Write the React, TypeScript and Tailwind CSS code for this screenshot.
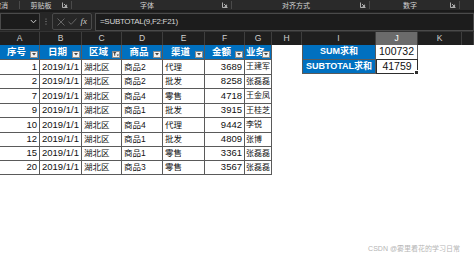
import React from 'react'

const font = { fontFamily: '"Liberation Sans","Noto Sans CJK SC",sans-serif' }

const cols = [
  { l: 'A', w: 'w-[40px]' },
  { l: 'B', w: 'w-[42px]' },
  { l: 'C', w: 'w-[40px]' },
  { l: 'D', w: 'w-[41px]' },
  { l: 'E', w: 'w-[42px]' },
  { l: 'F', w: 'w-[40px]' },
  { l: 'G', w: 'w-[27px]' },
  { l: 'H', w: 'w-[30px]' },
  { l: 'I', w: 'w-[74px]' },
  { l: 'J', w: 'w-[42px]' },
  { l: 'K', w: 'w-[44px]' },
  { l: '', w: 'flex-1' },
]

const heads = ['序号', '日期', '区域', '商品', '渠道', '金额', '业务员']
// numbers are right aligned and a bit larger than the CJK text
const cellCls = [
  'justify-end text-[9.5px] px-[2px]',
  'justify-end text-[9.5px] px-[2px]',
  'justify-start text-[8.5px] px-[2px]',
  'justify-start text-[8.5px] px-[2px]',
  'justify-start text-[8.5px] px-[2px]',
  'justify-end text-[9.5px] px-[2px]',
  'justify-start text-[8px] px-[1px]',
]

const rows = [
  ['1', '2019/1/1', '湖北区', '商品2', '代理', '3689', '王建军'],
  ['2', '2019/1/1', '湖北区', '商品2', '批发', '8258', '张磊磊'],
  ['7', '2019/1/1', '湖北区', '商品4', '零售', '4718', '王金凤'],
  ['9', '2019/1/1', '湖北区', '商品1', '批发', '3915', '王桂芝'],
  ['10', '2019/1/1', '湖北区', '商品4', '代理', '9442', '李锐'],
  ['12', '2019/1/1', '湖北区', '商品1', '批发', '4809', '张博'],
  ['15', '2019/1/1', '湖北区', '商品1', '零售', '3361', '张磊磊'],
  ['20', '2019/1/1', '湖北区', '商品3', '零售', '3567', '张磊磊'],
]
const rowH = ['h-[15px]', 'h-[14px]', 'h-[15px]', 'h-[14px]', 'h-[15px]', 'h-[14px]', 'h-[14px]', 'h-[14px]']

function Launcher() {
  return (
    <svg width="6" height="6" viewBox="0 0 6 6" className="text-[#bdbdbd]">
      <path d="M0.5 0.5V5.5H5.5" fill="none" stroke="currentColor" strokeWidth="0.9" />
      <path d="M2 2L4.6 4.6M4.6 2.6V4.6H2.6" fill="none" stroke="currentColor" strokeWidth="0.9" />
    </svg>
  )
}

function Group({ label, w }: { label: string; w: string }) {
  return (
    <div className={`${w} flex items-center border-r border-[#4a4a4a] h-[8px] pr-[3px]`}>
      <span className="flex-1 text-center">{label}</span>
      <Launcher />
    </div>
  )
}

function FilterBtn({ funnel }: { funnel?: boolean }) {
  return (
    <div className="absolute right-[1px] bottom-[1px] w-[8px] h-[7px] bg-[#f2f2f2] border border-[#8c8c8c] flex items-center justify-center">
      {funnel ? (
        <svg width="6" height="5" viewBox="0 0 6 5">
          <path d="M0 0H3.4L2.2 1.8V4L1.2 3.4V1.8Z" fill="#444" />
          <path d="M3.6 2.6H6L4.8 4.2Z" fill="#444" />
        </svg>
      ) : (
        <svg width="4" height="3" viewBox="0 0 4 3">
          <path d="M0 0H4L2 2.4Z" fill="#444" />
        </svg>
      )}
    </div>
  )
}

export default function App() {
  return (
    <div className="w-[474px] h-[260px] bg-white overflow-hidden relative" style={font}>
      {/* ribbon group labels */}
      <div className="h-[10px] bg-[#2a2a2a] flex items-center text-[7px] text-[#d4d4d4] leading-none">
        <div className="w-[20px] overflow-hidden border-r border-[#4a4a4a] h-[8px] flex items-center">
          <span className="ml-[-6px] whitespace-nowrap">撤消</span>
        </div>
        <Group label="剪贴板" w="w-[52px]" />
        <Group label="字体" w="w-[160px]" />
        <Group label="对齐方式" w="w-[138px]" />
        <Group label="数字" w="w-[90px]" />
        <div className="flex-1" />
      </div>
      <div className="h-[2px] bg-[#1a1a1a]" />

      {/* formula bar */}
      <div className="h-[19px] bg-[#262626] flex items-center text-[#d6d6d6]">
        <div className="w-[40px] h-[17px] bg-[#1c1c1c] border border-[#4a4a4a] flex items-center justify-end pr-[2px]">
          <svg width="7" height="5" viewBox="0 0 7 5">
            <path d="M0.8 1L3.5 3.8L6.2 1" fill="none" stroke="#c8c8c8" strokeWidth="1" />
          </svg>
        </div>
        <div className="w-[12px] flex justify-center">
          <svg width="2" height="7" viewBox="0 0 2 7">
            <circle cx="1" cy="1" r="0.6" fill="#9a9a9a" />
            <circle cx="1" cy="3.5" r="0.6" fill="#9a9a9a" />
            <circle cx="1" cy="6" r="0.6" fill="#9a9a9a" />
          </svg>
        </div>
        <div className="w-[40px] h-[17px] border border-[#4a4a4a] rounded-[2px] flex items-center justify-between px-[4px]">
          <svg width="8" height="8" viewBox="0 0 8 8">
            <path d="M0.5 0.5L7.5 7.5M7.5 0.5L0.5 7.5" stroke="#6e6e6e" strokeWidth="0.9" />
          </svg>
          <svg width="9" height="7" viewBox="0 0 9 7">
            <path d="M0.5 3.8L3.2 6.3L8.5 0.6" fill="none" stroke="#6e6e6e" strokeWidth="0.9" />
          </svg>
          <span className="text-[9px] italic text-[#d0d0d0]" style={{ fontFamily: '"Liberation Serif",serif' }}>
            <i>f</i>x
          </span>
        </div>
        <div className="w-[3px]" />
        <div className="flex-1 h-[18px] bg-[#1c1c1c] border border-[#4a4a4a] flex items-center pl-[4px] text-[8px] tracking-[-0.3px]">
          =SUBTOTAL(9,F2:F21)
        </div>
      </div>

      {/* column headers */}
      <div className="h-[14px] bg-[#1f1f1f] flex text-[8.5px] text-[#d0d0d0] border-t border-[#333]">
        {cols.map((c) => (
          <div
            key={c.l + c.w}
            className={`${c.w} flex items-center justify-center border-r border-[#3e3e3e] ${
              c.l === 'J' ? 'bg-[#6b6b6b] text-white' : ''
            }`}
          >
            {c.l}
          </div>
        ))}
      </div>

      {/* sheet body */}
      <div className="flex items-start">
        <div className="flex flex-col">
          <div className="flex h-[15px] bg-[#0070c0] text-white font-bold text-[9.5px]">
            {heads.map((h, i) => (
              <div
                key={h}
                className={`${cols[i].w} relative flex items-center border-r border-b border-[#5a5a5a] overflow-hidden whitespace-nowrap ${
                  i === 6 ? 'justify-start pl-[1px]' : 'justify-center pr-[6px]'
                }`}
              >
                {i === 6 ? '业务' : h}
                <FilterBtn funnel={i === 2} />
              </div>
            ))}
          </div>
          {rows.map((r, ri) => (
            <div key={ri} className={`flex ${rowH[ri]} text-[#111]`}>
              {r.map((v, i) => (
                <div
                  key={i}
                  className={`${cols[i].w} ${cellCls[i]} flex items-center border-r border-b border-[#5a5a5a] whitespace-nowrap overflow-hidden`}
                >
                  {v}
                </div>
              ))}
            </div>
          ))}
        </div>

        <div className="w-[30px]" />

        <div className="flex flex-col border-l border-[#5a5a5a]">
          <div className="flex h-[15px]">
            <div className="w-[73px] bg-[#0070c0] text-white font-bold text-[9px] flex items-center justify-center border-r border-b border-[#5a5a5a]">
              SUM求和
            </div>
            <div className="w-[42px] text-[10.5px] text-[#111] flex items-center justify-center border-r border-b border-[#5a5a5a]">
              100732
            </div>
          </div>
          <div className="flex h-[14px]">
            <div className="w-[73px] bg-[#0070c0] text-white font-bold text-[9px] flex items-center justify-center border-r border-b border-[#5a5a5a] whitespace-nowrap">
              SUBTOTAL求和
            </div>
            <div className="w-[42px] relative text-[10.5px] text-[#111] flex items-center justify-center border border-[#2d2d2d] -mt-px">
              41759
              <div className="absolute right-[-2px] bottom-[-2px] w-[3px] h-[3px] bg-[#2d2d2d] border border-white box-content" />
            </div>
          </div>
        </div>
      </div>

      <div className="absolute right-[14px] bottom-[6px] text-[7px] text-[#b5b5b5]">CSDN @雾里看花的学习日常</div>
    </div>
  )
}
